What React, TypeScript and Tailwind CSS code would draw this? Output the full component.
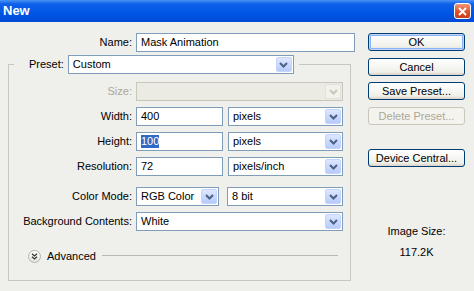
import type { ReactNode } from 'react';

function Chevron({ color }: { color: string }) {
  return (
    <svg width="9" height="6" viewBox="0 0 9 6">
      <path d="M1 1 L4.5 4.5 L8 1" fill="none" stroke={color} strokeWidth="2" />
    </svg>
  );
}

function Combo({
  value,
  className,
  disabled = false,
}: {
  value: string;
  className: string;
  disabled?: boolean;
}) {
  const box = disabled
    ? 'border-[#c9c7ba] bg-[#ebebe4] text-[#aca899]'
    : 'border-[#7f9db9] bg-white text-black';
  const arrow = disabled
    ? 'border-[#e3e2da] bg-[#f2f1ea]'
    : 'border-[#c4d4fb] bg-[linear-gradient(to_bottom,#dde7fe,#b7cbfb)]';

  return (
    <div className={`flex h-[19px] items-center justify-between border ${box} ${className}`}>
      <span className="pl-[4px] leading-none">{value}</span>
      <div className={`mr-px flex h-[15px] w-[16px] items-center justify-center rounded-[2px] border ${arrow}`}>
        <Chevron color={disabled ? '#c9c7ba' : '#4d6185'} />
      </div>
    </div>
  );
}

function Field({ children, className }: { children: ReactNode; className: string }) {
  return (
    <div className={`flex h-[19px] items-center border border-[#7f9db9] bg-white pl-[4px] ${className}`}>
      {children}
    </div>
  );
}

function Row({
  label,
  children,
  muted = false,
  className = '',
}: {
  label: string;
  children: ReactNode;
  muted?: boolean;
  className?: string;
}) {
  return (
    <div className={`flex items-center ${className}`}>
      <span className={`w-[123px] text-right ${muted ? 'text-[#aca899]' : 'text-black'}`}>{label}</span>
      <div className="ml-[4px] flex items-center">{children}</div>
    </div>
  );
}

function XpButton({
  children,
  primary = false,
  disabled = false,
}: {
  children: ReactNode;
  primary?: boolean;
  disabled?: boolean;
}) {
  const tone = disabled
    ? 'border-[#c9c7ba] bg-[#f4f3ee] text-[#aca899]'
    : primary
      ? 'border-[#003c74] bg-[linear-gradient(to_bottom,#ffffff,#f0f0ea_80%,#d8d2c6)] text-black shadow-[inset_0_0_0_1px_#c2d6fa,inset_0_0_0_2px_#8db2f3]'
      : 'border-[#003c74] bg-[linear-gradient(to_bottom,#ffffff,#f0f0ea_80%,#d8d2c6)] text-black';

  return (
    <div className={`flex h-[18px] w-[97px] items-center justify-center rounded-[3px] border ${tone}`}>
      {children}
    </div>
  );
}

export default function App() {
  return (
    <div className="h-[291px] w-[474px] overflow-hidden bg-[#efefec] font-['Liberation_Sans',Arial,sans-serif] text-[11px] text-black">
      {/* title bar */}
      <div className="flex h-[22px] items-center justify-between bg-[linear-gradient(to_bottom,#4a93f6_0%,#0d61e8_18%,#0055e5_60%,#004ad6_100%)] pl-[3px] pr-[3px]">
        <span className="text-[13px] font-bold text-white">New</span>
        <div className="flex h-[16px] w-[17px] items-center justify-center rounded-[3px] border border-white bg-[linear-gradient(to_bottom,#f0977a,#e0512a_55%,#c53e1a)]">
          <svg width="9" height="9" viewBox="0 0 9 9">
            <path d="M1 1 L8 8 M8 1 L1 8" stroke="white" strokeWidth="2" />
          </svg>
        </div>
      </div>

      <div className="flex pt-[11px]">
        {/* left side */}
        <div className="w-[355px]">
          <div className="flex items-center">
            <span className="w-[132px] text-right">Name:</span>
            <Field className="ml-[4px] w-[219px]">Mask Animation</Field>
          </div>

          <fieldset className="ml-[8px] mt-[3px] w-[343px] border border-[#c9c7bd] px-0 pb-[15px] pt-0">
            <legend className="ml-[5px] flex items-center pl-[15px] pr-[5px]">
              <span>Preset:</span>
              <Combo value="Custom" className="ml-[4px] w-[226px]" />
            </legend>

            <Row label="Size:" muted className="mt-[8px]">
              <Combo value="" disabled className="w-[207px]" />
            </Row>
            <Row label="Width:" className="mt-[6px]">
              <Field className="w-[87px]">400</Field>
              <Combo value="pixels" className="ml-[5px] w-[115px]" />
            </Row>
            <Row label="Height:" className="mt-[6px]">
              <Field className="w-[87px]">
                <span className="bg-[#316ac5] leading-[13px] text-white">100</span>
              </Field>
              <Combo value="pixels" className="ml-[5px] w-[115px]" />
            </Row>
            <Row label="Resolution:" className="mt-[6px]">
              <Field className="w-[87px]">72</Field>
              <Combo value="pixels/inch" className="ml-[5px] w-[115px]" />
            </Row>
            <Row label="Color Mode:" className="mt-[11px]">
              <Combo value="RGB Color" className="w-[83px]" />
              <Combo value="8 bit" className="ml-[8px] w-[116px]" />
            </Row>
            <Row label="Background Contents:" className="mt-[6px]">
              <Combo value="White" className="w-[207px]" />
            </Row>

            <div className="mt-[17px] flex items-center pl-[19px]">
              <div className="flex h-[13px] w-[13px] items-center justify-center rounded-full border border-[#b4b4ac] bg-[linear-gradient(to_bottom,#ffffff,#e4e3dc)]">
                <svg width="7" height="7" viewBox="0 0 7 7">
                  <path d="M1 0.8 L3.5 3 L6 0.8 M1 3.8 L3.5 6 L6 3.8" fill="none" stroke="#333" strokeWidth="1.2" />
                </svg>
              </div>
              <span className="ml-[6px]">Advanced</span>
              <div className="ml-[6px] h-[2px] w-[236px] border-t border-[#b8b8b0] border-b-white" />
            </div>
          </fieldset>
        </div>

        {/* right side */}
        <div className="ml-[13px] flex w-[97px] flex-col">
          <XpButton primary>OK</XpButton>
          <div className="mt-[7px]">
            <XpButton>Cancel</XpButton>
          </div>
          <div className="mt-[6px]">
            <XpButton>Save Preset...</XpButton>
          </div>
          <div className="mt-[7px]">
            <XpButton disabled>Delete Preset...</XpButton>
          </div>
          <div className="mt-[24px]">
            <XpButton>Device Central...</XpButton>
          </div>
          <div className="mt-[57px] text-center leading-[14px]">Image Size:</div>
          <div className="mt-[7px] text-center leading-[14px]">117.2K</div>
        </div>
      </div>
    </div>
  );
}
